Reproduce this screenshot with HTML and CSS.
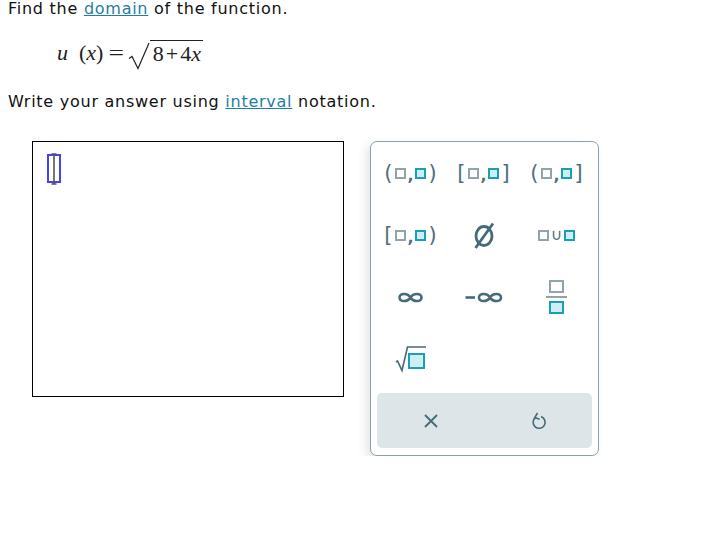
FILE: index.html
```html
<!DOCTYPE html>
<html>
<head>
<meta charset="utf-8">
<link rel="stylesheet" href="styles.css">
</head>
<body>
<div class="page">
  <p class="line first">Find the <a href="#">domain</a> of the function.</p>
  <div class="formula">
    <span class="it">u</span><span class="paren">(<span class="it">x</span>)</span><span class="eq">=</span><span class="sqrt"><svg class="rad" width="22" height="28" viewBox="0 0 22 28"><path d="M1 16.5 L4 14.5 L10 26.5 L21 1" fill="none" stroke="#222" stroke-width="1.2"/></svg><span class="radicand">8<span class="plus">+</span>4<span class="it">x</span></span></span>
  </div>
  <p class="line second">Write your answer using <a href="#">interval</a> notation.</p>

  <div class="work">
    <div class="answer">
      <svg class="cursor" width="16" height="32" viewBox="0 0 16 32">
        <rect x="2" y="2" width="12" height="27" fill="none" stroke="#4444ee" stroke-width="2"/>
        <path d="M8 1 V31 M5.5 1 H10.5 M5.5 31 H10.5" stroke="#555" stroke-width="1.6" fill="none"/>
      </svg>
    </div>

    <div class="panel">
      <div class="keys">
        <div class="key"><span class="br">(</span><span class="box g"></span><span class="cm">,</span><span class="box c"></span><span class="br">)</span></div>
        <div class="key"><span class="br">[</span><span class="box g"></span><span class="cm">,</span><span class="box c"></span><span class="br">]</span></div>
        <div class="key"><span class="br">(</span><span class="box g"></span><span class="cm">,</span><span class="box c"></span><span class="br">]</span></div>

        <div class="key"><span class="br">[</span><span class="box g"></span><span class="cm">,</span><span class="box c"></span><span class="br">)</span></div>
        <div class="key">
          <svg width="24" height="27" viewBox="0 0 24 27"><ellipse cx="12" cy="14" rx="8" ry="9.5" fill="none" stroke="#456b78" stroke-width="2.8"/><path d="M21 1.5 L3.5 26" stroke="#456b78" stroke-width="2.8"/></svg>
        </div>
        <div class="key"><span class="box g"></span><span class="cup">∪</span><span class="box c"></span></div>

        <div class="key">
          <svg width="25" height="13" viewBox="0 0 25 13"><path d="M12.5 6.5 C10 2 1.5 1.5 1.5 6.5 C1.5 11.5 10 11 12.5 6.5 C15 2 23.5 1.5 23.5 6.5 C23.5 11.5 15 11 12.5 6.5 Z" fill="none" stroke="#456b78" stroke-width="2.6"/></svg>
        </div>
        <div class="key">
          <svg width="38" height="13" viewBox="0 0 38 13"><path d="M0.5 6.5 H10" stroke="#456b78" stroke-width="2.6"/><path d="M25 6.5 C22.5 2 14 1.5 14 6.5 C14 11.5 22.5 11 25 6.5 C27.5 2 36 1.5 36 6.5 C36 11.5 27.5 11 25 6.5 Z" fill="none" stroke="#456b78" stroke-width="2.6"/></svg>
        </div>
        <div class="key frac">
          <span class="box g big"></span>
          <span class="bar"></span>
          <span class="box c big"></span>
        </div>

        <div class="key">
          <svg width="32" height="28" viewBox="0 0 32 28"><path d="M1 17 L2.5 16 L7 25.5 L12.5 2 H31" fill="none" stroke="#456b78" stroke-width="1.6"/><rect x="14" y="9" width="15" height="14" fill="#cdeef3" stroke="#1a9fb6" stroke-width="2"/></svg>
        </div>
      </div>

      <div class="actions">
        <div class="act">
          <svg width="16" height="16" viewBox="0 0 16 16"><path d="M2 2 L14 14 M14 2 L2 14" stroke="#456b78" stroke-width="1.8"/></svg>
        </div>
        <div class="act">
          <svg width="18" height="20" viewBox="0 0 18 20"><path d="M6.5 6.5 A6 6 0 1 0 12 5.6" fill="none" stroke="#456b78" stroke-width="1.6"/><path d="M8.5 2 L5.8 6.6 L10.6 8.2" fill="none" stroke="#456b78" stroke-width="1.6"/></svg>
        </div>
      </div>
    </div>
  </div>
</div>
</body>
</html>
```

FILE: styles.css
```css
* { box-sizing: border-box; }
html, body { margin: 0; padding: 0; background: #fff; }
body {
  font-family: "DejaVu Sans", Verdana, sans-serif;
  font-size: 16px;
  color: #111;
}
.page { padding: 0 8px; }
.line { margin: 0; line-height: 18px; letter-spacing: 0.74px; }
.first { padding-top: 0; }
a { color: #1f7ea3; text-decoration: underline; }

.formula {
  font-family: "Liberation Serif", "Times New Roman", serif;
  font-size: 22px;
  color: #222;
  display: flex;
  align-items: flex-end;
  height: 55px;
  padding: 0 0 7px 49px;
}
.formula .it { font-style: italic; }
.formula .paren { margin-left: 11px; }
.formula .eq { margin: 0 5px 0 7px; transform: scaleX(1.25); }
.sqrt { display: inline-flex; align-items: flex-end; }
.rad { display: block; margin-bottom: -4px; }
.radicand {
  border-top: 1.2px solid #222;
  padding: 1px 2px 0 3px;
  line-height: 24px;
}
.plus { margin: 0 2px; }

.second { margin-top: 20px; }

.work {
  display: flex;
  gap: 26px;
  margin-top: 30px;
  margin-left: 24px;
  align-items: flex-start;
}
.answer {
  width: 312px;
  height: 256px;
  border: 1px solid #000;
  padding: 11px 0 0 13px;
}
.cursor { display: block; }

.panel {
  width: 229px;
  height: 315px;
  border: 1px solid #87a2ab;
  border-radius: 7px;
  background: #fff;
  box-shadow: -4px 4px 10px rgba(0, 0, 0, 0.1);
  padding: 10px 0 0 0;
  display: flex;
  flex-direction: column;
}
.keys {
  display: grid;
  grid-template-columns: repeat(3, 73px);
  grid-auto-rows: 42px;
  row-gap: 20px;
  padding-left: 3px;
}
.key {
  display: flex;
  align-items: center;
  justify-content: center;
  color: #456b78;
}
.key svg { display: block; }
.br {
  font-family: "DejaVu Sans", sans-serif;
  font-size: 21px;
  line-height: 20px;
  color: #4f707c;
}
.cm {
  font-size: 16px;
  line-height: 14px;
  margin: 6px 1px 0 1px;
  color: #4f707c;
  font-weight: bold;
}
.box {
  display: inline-block;
  width: 11px;
  height: 11px;
  border: 2px solid #8fa4ab;
  background: #fff;
}
.br + .box { margin-left: 3px; }
.box + .br { margin-left: 3px; }
.box.c { border-color: #1a9fb6; background: #cdeef3; }
.cup {
  font-size: 16px;
  line-height: 14px;
  color: #4f707c;
  margin: 0 2px;
}
.frac { flex-direction: column; gap: 3px; }
.box.big { width: 15px; height: 13px; }
.frac .bar { width: 21px; height: 2px; background: #8fa4ab; }

.actions {
  margin: 13px 6px 0 6px;
  height: 55px;
  background: #dde5e8;
  border-radius: 5px;
  display: grid;
  grid-template-columns: 1fr 1fr;
}
.act {
  display: flex;
  align-items: center;
  justify-content: center;
}
.act svg { display: block; }
```
